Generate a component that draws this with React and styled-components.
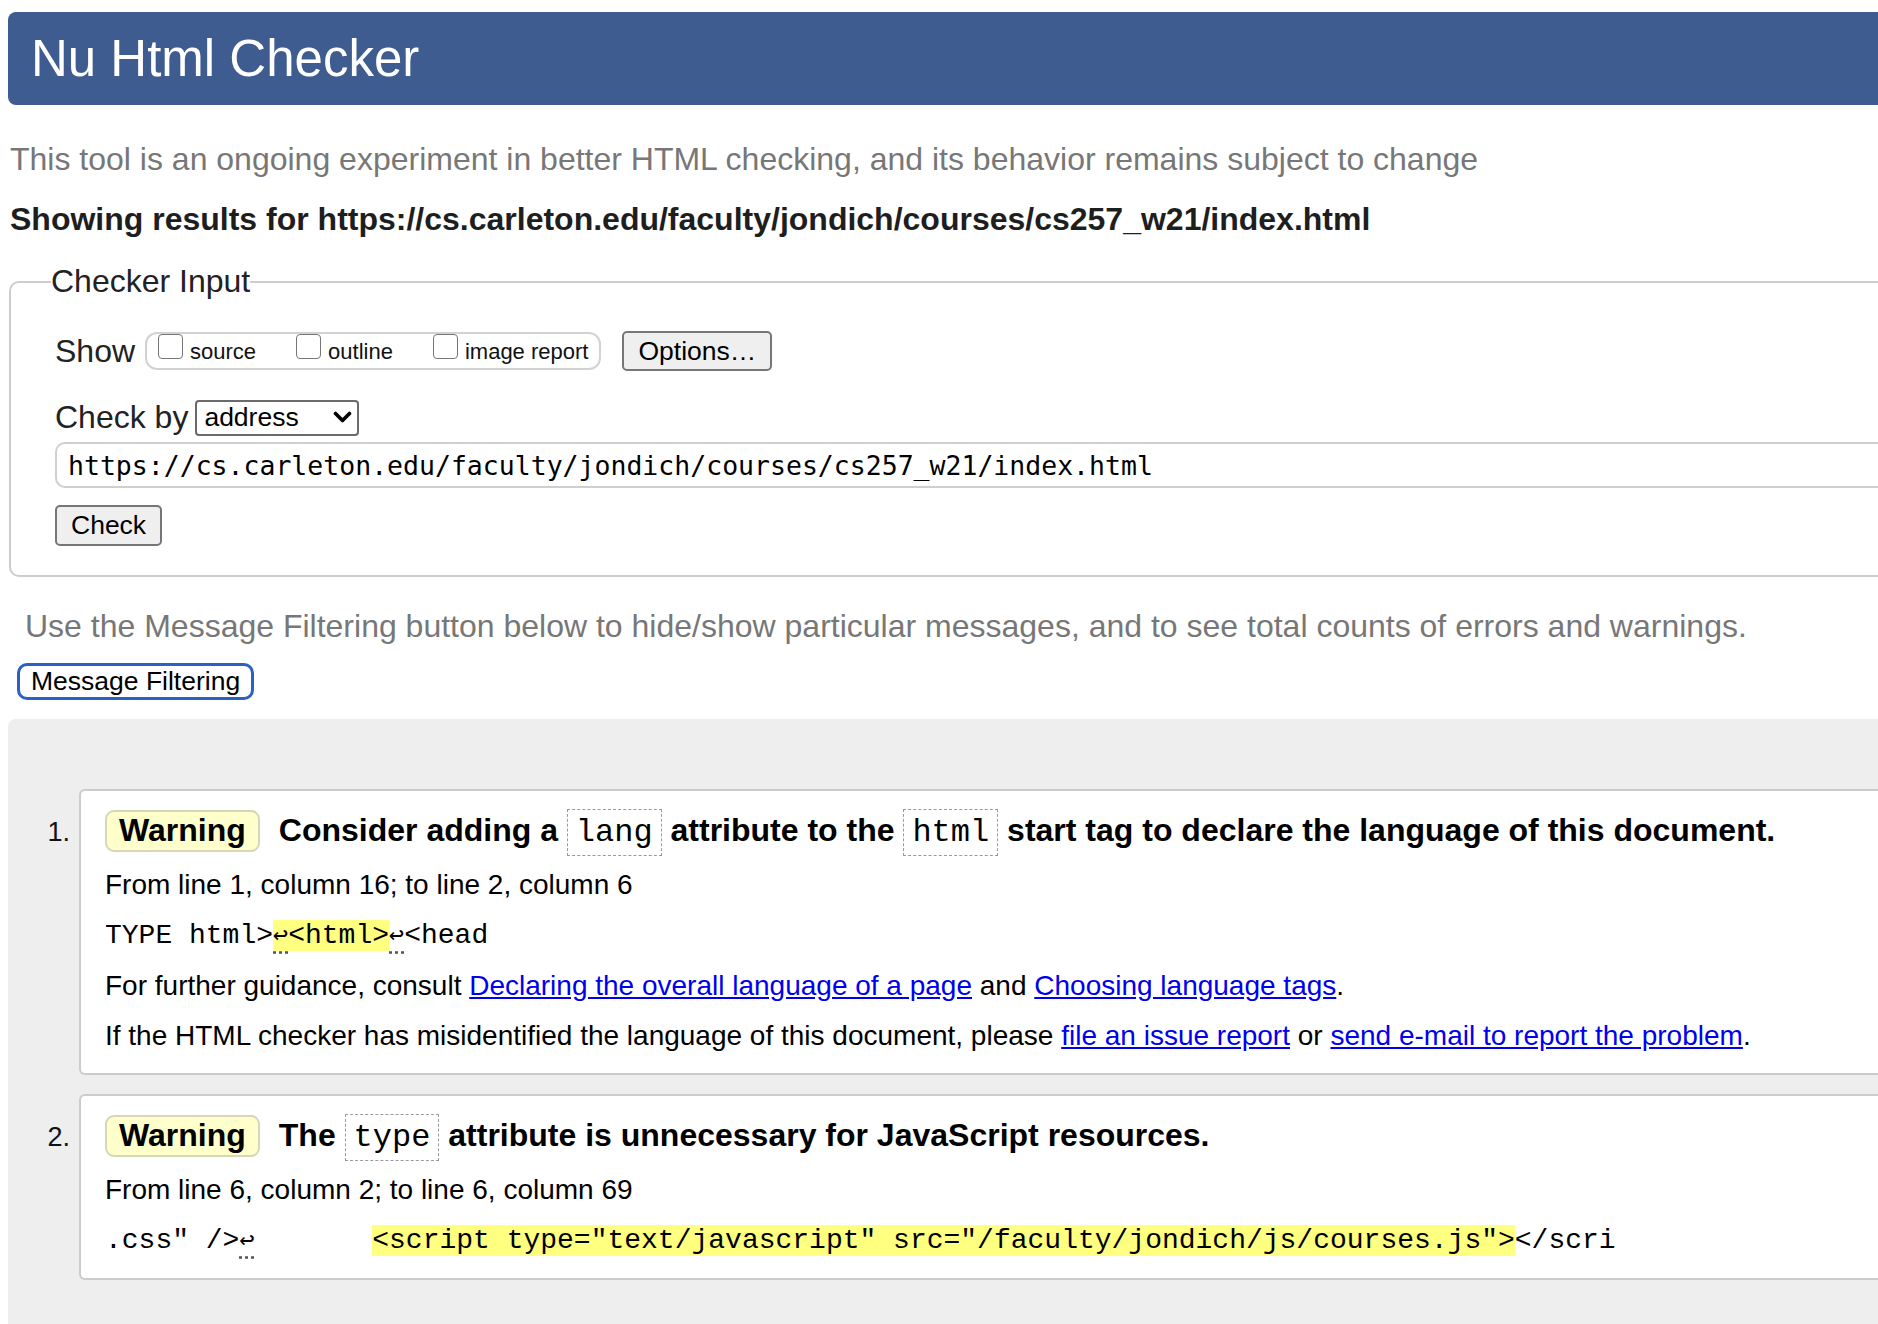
import React from 'react';
import styled, { createGlobalStyle } from 'styled-components';

const GlobalStyle = createGlobalStyle`
  html, body {
    margin: 0;
    padding: 0;
    overflow: hidden;
    background: #fff;
  }
  body {
    font-family: "Liberation Sans", Arial, Helvetica, sans-serif;
    color: #000;
  }
`;

const LF = () => <Return>↩</Return>;

const Message = ({ num, title, children }) => (
  <Item>
    <Num>{num}.</Num>
    <Card>
      <TitleRow>
        <Badge>Warning</Badge>
        {title}
      </TitleRow>
      {children}
    </Card>
  </Item>
);

const App = () => (
  <Page>
    <GlobalStyle />
    <Header>
      <Title>Nu Html Checker</Title>
    </Header>
    <Intro>
      This tool is an ongoing experiment in better HTML checking, and its behavior remains subject to change
    </Intro>
    <Showing>Showing results for https://cs.carleton.edu/faculty/jondich/courses/cs257_w21/index.html</Showing>

    <InputSet>
      <Legend>Checker Input</Legend>
      <Row>
        <Label>Show</Label>
        <Group>
          <Option>
            <Box />
            <OptLabel>source</OptLabel>
          </Option>
          <Option>
            <Box />
            <OptLabel>outline</OptLabel>
          </Option>
          <Option>
            <Box />
            <OptLabel>image report</OptLabel>
          </Option>
        </Group>
        <Button $ml={21} $h={40}>Options…</Button>
      </Row>
      <Row $mt={28}>
        <Label>Check by</Label>
        <Select>
          address
          <svg width="19" height="13" viewBox="0 0 19 13">
            <path d="M2.5 2.5 L9.5 9.5 L16.5 2.5" fill="none" stroke="#000" strokeWidth="3.6" strokeLinecap="round" strokeLinejoin="round" />
          </svg>
        </Select>
      </Row>
      <UrlField readOnly value="https://cs.carleton.edu/faculty/jondich/courses/cs257_w21/index.html" />
      <Button $mt={17} $h={41}>Check</Button>
    </InputSet>

    <FilterNote>
      Use the Message Filtering button below to hide/show particular messages, and to see total counts of errors and warnings.
    </FilterNote>
    <FilterButton>Message Filtering</FilterButton>

    <Results>
      <Message
        num={1}
        title={
          <>
            Consider adding a <Code>lang</Code> attribute to the <Code>html</Code> start tag to declare the language of this document.
          </>
        }
      >
        <P>From line 1, column 16; to line 2, column 6</P>
        <Extract>
          TYPE html&gt;<Mark><LF />&lt;html&gt;</Mark><LF />&lt;head
        </Extract>
        <P>
          For further guidance, consult <Link href="#">Declaring the overall language of a page</Link> and{' '}
          <Link href="#">Choosing language tags</Link>.
        </P>
        <P>
          If the HTML checker has misidentified the language of this document, please{' '}
          <Link href="#">file an issue report</Link> or <Link href="#">send e-mail to report the problem</Link>.
        </P>
      </Message>
      <Message
        num={2}
        title={
          <>
            The <Code>type</Code> attribute is unnecessary for JavaScript resources.
          </>
        }
      >
        <P>From line 6, column 2; to line 6, column 69</P>
        <Extract>
          .css" /&gt;<LF />{'       '}<Mark>&lt;script type="text/javascript" src="/faculty/jondich/js/courses.js"&gt;</Mark>&lt;/scri
        </Extract>
      </Message>
    </Results>
  </Page>
);

export default App;

const Page = styled.div`
  width: 2300px;
  padding: 12px 0 0 8px;
  box-sizing: border-box;
`;

const Header = styled.header`
  height: 93px;
  display: flex;
  align-items: center;
  padding-left: 23px;
  background: #3e5c8f;
  border-radius: 8px;
`;

const Title = styled.h1`
  margin: 0;
  font-size: 51px;
  font-weight: normal;
  color: #fff;
  line-height: 1;
`;

const Intro = styled.p`
  margin: 36px 0 0 2px;
  font-size: 32px;
  line-height: 37px;
  color: #777;
`;

const Showing = styled.p`
  margin: 23px 0 0 2px;
  font-size: 32px;
  line-height: 37px;
  font-weight: bold;
  color: #1e1e1e;
`;

const InputSet = styled.fieldset`
  margin: 25px 0 0 1px;
  padding: 31px 0 29px 44px;
  border: 2px solid #cdcdcd;
  border-radius: 10px;
  min-width: 0;
`;

const Legend = styled.legend`
  margin-left: -4px;
  padding: 0;
  font-size: 32px;
  line-height: 37px;
  color: #222;
`;

const Row = styled.div`
  display: flex;
  align-items: center;
  margin-top: ${(p) => p.$mt || 0}px;
`;

const Label = styled.span`
  font-size: 32px;
  line-height: 37px;
  color: #222;
  margin-right: 10px;
`;

const Group = styled.div`
  display: flex;
  align-items: flex-start;
  gap: 40px;
  height: 38px;
  box-sizing: border-box;
  padding: 0 11px;
  border: 2px solid #d2d2d2;
  border-radius: 12px;
`;

const Option = styled.label`
  display: flex;
  align-items: flex-start;
  gap: 7px;
`;

const Box = styled.span`
  width: 25px;
  height: 25px;
  box-sizing: border-box;
  border: 1.5px solid #767676;
  border-radius: 4px;
  background: #fff;
`;

const OptLabel = styled.span`
  margin-top: 5px;
  font-size: 22px;
  line-height: 25px;
  color: #111;
`;

const Button = styled.button`
  display: flex;
  align-items: center;
  height: ${(p) => p.$h}px;
  margin: ${(p) => p.$mt || 0}px 0 0 ${(p) => p.$ml || 0}px;
  padding: 0 14px;
  box-sizing: border-box;
  border: 2px solid #767676;
  border-radius: 5px;
  background: #efefef;
  font-family: "Liberation Sans", Arial, sans-serif;
  font-size: 26.5px;
  color: #000;
`;

const Select = styled.div`
  display: flex;
  align-items: center;
  justify-content: space-between;
  width: 164px;
  height: 36px;
  box-sizing: border-box;
  margin-left: -3px;
  padding: 0 5px 0 7px;
  border: 2px solid #6b6b6b;
  border-radius: 4px;
  font-size: 26.5px;
  color: #000;
`;

const UrlField = styled.input`
  display: block;
  width: 100%;
  height: 46px;
  box-sizing: border-box;
  margin: 6px 0 0;
  padding: 0 0 0 11px;
  border: 2px solid #cfcfcf;
  border-right: none;
  border-radius: 10px 0 0 10px;
  font-family: "DejaVu Sans Mono", monospace;
  font-size: 26.5px;
  line-height: 40px;
  color: #000;
  outline: none;
`;

const FilterNote = styled.p`
  margin: 31px 0 0 17px;
  font-size: 32px;
  line-height: 37px;
  color: #777;
`;

const FilterButton = styled.button`
  display: flex;
  align-items: center;
  height: 37px;
  margin: 18px 0 0 9px;
  padding: 0 11px;
  box-sizing: border-box;
  border: 3px solid #2b60c6;
  border-radius: 10px;
  background: #fff;
  font-family: "Liberation Sans", Arial, sans-serif;
  font-size: 26.5px;
  color: #000;
`;

const Results = styled.section`
  display: flex;
  flex-direction: column;
  gap: 19px;
  margin-top: 19px;
  min-height: 700px;
  padding: 70px 0 60px;
  background: #eeeeee;
  border-radius: 8px 0 0 0;
`;

const Item = styled.div`
  display: flex;
  align-items: baseline;
`;

const Num = styled.span`
  width: 62px;
  margin-right: 9px;
  text-align: right;
  font-size: 27px;
  color: #111;
`;

const Card = styled.div`
  flex: 1;
  padding: 18px 24px 20px;
  background: #fff;
  border: 2px solid #cccccc;
  border-right: none;
  border-radius: 6px 0 0 6px;
`;

const TitleRow = styled.div`
  margin-bottom: 12px;
  font-size: 32px;
  line-height: 37px;
  font-weight: bold;
  white-space: nowrap;
`;

const Badge = styled.span`
  display: inline-block;
  margin-right: 19px;
  padding: 0 12px 2px;
  line-height: 36px;
  background: #ffffcc;
  border: 2px solid #d6d6b8;
  border-radius: 9px;
`;

const Code = styled.code`
  display: inline-block;
  padding: 5px 8px 4px;
  line-height: 36px;
  font-family: "Liberation Mono", "Courier New", monospace;
  font-size: 32px;
  font-weight: normal;
  border: 1px dashed #9a9a9a;
`;

const P = styled.p`
  margin: 16px 0 0;
  font-size: 28px;
  line-height: 34px;
  white-space: nowrap;
  ${TitleRow} + & {
    margin-top: 0;
  }
`;

const Extract = styled(P)`
  font-family: "Liberation Mono", "DejaVu Sans Mono", monospace;
  white-space: pre;
`;

const Mark = styled.mark`
  background: #ffff80;
  color: inherit;
`;

const Return = styled.span`
  font-family: "DejaVu Sans Mono", monospace;
  font-size: 0.9em;
  text-decoration: underline dotted #555;
  text-underline-offset: 8px;
`;

const Link = styled.a`
  color: #0000ee;
  text-decoration: underline;
`;
